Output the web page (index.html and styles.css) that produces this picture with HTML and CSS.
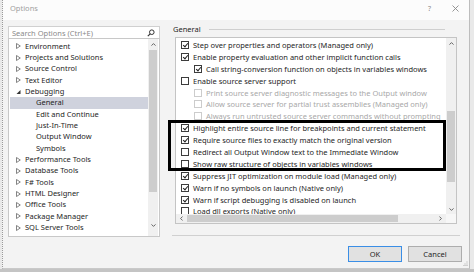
FILE: index.html
```html
<!DOCTYPE html>
<html>
<head>
<meta charset="utf-8">
<link rel="stylesheet" href="styles.css">
</head>
<body>
<div class="screen">
  <div class="dialog">
    <div class="titlebar">
      <span class="title">Options</span>
      <span class="tb-btns">
        <span class="help">?</span>
        <svg class="close" width="7" height="7" viewBox="0 0 7 7"><path d="M0.5 0.5 L6.5 6.5 M6.5 0.5 L0.5 6.5" stroke="#8a8a8a" stroke-width="0.9" fill="none"/></svg>
      </span>
    </div>
    <div class="content">
      <div class="left">
        <div class="search">
          <span class="search-text">Search Options (Ctrl+E)</span>
          <svg class="search-icon" width="8" height="8" viewBox="0 0 8 8"><circle cx="4.8" cy="3.2" r="2.3" stroke="#333" stroke-width="1" fill="none"/><path d="M3.2 4.8 L0.8 7.2" stroke="#333" stroke-width="1.2"/></svg>
        </div>
        <div class="tree">
          <ul class="tree-list">
            <li class="node"><svg class="tri" width="5" height="6" viewBox="0 0 5 6"><path d="M0.5 0.5 L4.3 3 L0.5 5.5 Z" fill="none" stroke="#666" stroke-width="0.8"/></svg>Environment</li>
            <li class="node"><svg class="tri" width="5" height="6" viewBox="0 0 5 6"><path d="M0.5 0.5 L4.3 3 L0.5 5.5 Z" fill="none" stroke="#666" stroke-width="0.8"/></svg>Projects and Solutions</li>
            <li class="node"><svg class="tri" width="5" height="6" viewBox="0 0 5 6"><path d="M0.5 0.5 L4.3 3 L0.5 5.5 Z" fill="none" stroke="#666" stroke-width="0.8"/></svg>Source Control</li>
            <li class="node"><svg class="tri" width="5" height="6" viewBox="0 0 5 6"><path d="M0.5 0.5 L4.3 3 L0.5 5.5 Z" fill="none" stroke="#666" stroke-width="0.8"/></svg>Text Editor</li>
            <li class="node"><svg class="tri" width="5" height="6" viewBox="0 0 5 6"><path d="M4.5 1 L4.5 5 L0.5 5 Z" fill="#333"/></svg>Debugging</li>
            <li class="node child selected">General</li>
            <li class="node child">Edit and Continue</li>
            <li class="node child">Just-In-Time</li>
            <li class="node child">Output Window</li>
            <li class="node child">Symbols</li>
            <li class="node"><svg class="tri" width="5" height="6" viewBox="0 0 5 6"><path d="M0.5 0.5 L4.3 3 L0.5 5.5 Z" fill="none" stroke="#666" stroke-width="0.8"/></svg>Performance Tools</li>
            <li class="node"><svg class="tri" width="5" height="6" viewBox="0 0 5 6"><path d="M0.5 0.5 L4.3 3 L0.5 5.5 Z" fill="none" stroke="#666" stroke-width="0.8"/></svg>Database Tools</li>
            <li class="node"><svg class="tri" width="5" height="6" viewBox="0 0 5 6"><path d="M0.5 0.5 L4.3 3 L0.5 5.5 Z" fill="none" stroke="#666" stroke-width="0.8"/></svg>F# Tools</li>
            <li class="node"><svg class="tri" width="5" height="6" viewBox="0 0 5 6"><path d="M0.5 0.5 L4.3 3 L0.5 5.5 Z" fill="none" stroke="#666" stroke-width="0.8"/></svg>HTML Designer</li>
            <li class="node"><svg class="tri" width="5" height="6" viewBox="0 0 5 6"><path d="M0.5 0.5 L4.3 3 L0.5 5.5 Z" fill="none" stroke="#666" stroke-width="0.8"/></svg>Office Tools</li>
            <li class="node"><svg class="tri" width="5" height="6" viewBox="0 0 5 6"><path d="M0.5 0.5 L4.3 3 L0.5 5.5 Z" fill="none" stroke="#666" stroke-width="0.8"/></svg>Package Manager</li>
            <li class="node"><svg class="tri" width="5" height="6" viewBox="0 0 5 6"><path d="M0.5 0.5 L4.3 3 L0.5 5.5 Z" fill="none" stroke="#666" stroke-width="0.8"/></svg>SQL Server Tools</li>
            <li class="node"><svg class="tri" width="5" height="6" viewBox="0 0 5 6"><path d="M0.5 0.5 L4.3 3 L0.5 5.5 Z" fill="none" stroke="#666" stroke-width="0.8"/></svg>Text Templating</li>
          </ul>
          <div class="vscroll tree-scroll">
            <div class="arrow"><svg width="5" height="3" viewBox="0 0 5 3"><path d="M0.5 2.6 L2.5 0.6 L4.5 2.6" stroke="#555" stroke-width="0.9" fill="none"/></svg></div>
            <div class="track"><div class="thumb tree-thumb"></div></div>
            <div class="arrow"><svg width="5" height="3" viewBox="0 0 5 3"><path d="M0.5 0.4 L2.5 2.4 L4.5 0.4" stroke="#555" stroke-width="0.9" fill="none"/></svg></div>
          </div>
        </div>
      </div>
      <div class="right">
        <div class="group-head"><span class="group-label">General</span><span class="rule"></span></div>
        <div class="listbox">
          <div class="list-main">
            <div class="rows">
              <div class="row"><span class="cb on"></span>Step over properties and operators (Managed only)</div>
              <div class="row"><span class="cb on"></span>Enable property evaluation and other implicit function calls</div>
              <div class="row indent"><span class="cb on"></span>Call string-conversion function on objects in variables windows</div>
              <div class="row"><span class="cb"></span>Enable source server support</div>
              <div class="row indent disabled"><span class="cb"></span>Print source server diagnostic messages to the Output window</div>
              <div class="row indent disabled"><span class="cb"></span>Allow source server for partial trust assemblies (Managed only)</div>
              <div class="row indent disabled"><span class="cb"></span>Always run untrusted source server commands without prompting</div>
              <div class="row"><span class="cb on"></span>Highlight entire source line for breakpoints and current statement</div>
              <div class="row"><span class="cb on"></span>Require source files to exactly match the original version</div>
              <div class="row"><span class="cb"></span>Redirect all Output Window text to the Immediate Window</div>
              <div class="row"><span class="cb"></span>Show raw structure of objects in variables windows</div>
              <div class="row"><span class="cb on"></span>Suppress JIT optimization on module load (Managed only)</div>
              <div class="row"><span class="cb on"></span>Warn if no symbols on launch (Native only)</div>
              <div class="row"><span class="cb on"></span>Warn if script debugging is disabled on launch</div>
              <div class="row"><span class="cb"></span>Load dll exports (Native only)</div>
            </div>
            <div class="vscroll list-scroll">
              <div class="arrow"><svg width="5" height="3" viewBox="0 0 5 3"><path d="M0.5 2.6 L2.5 0.6 L4.5 2.6" stroke="#555" stroke-width="0.9" fill="none"/></svg></div>
              <div class="track"><div class="thumb list-thumb"></div></div>
              <div class="arrow"><svg width="5" height="3" viewBox="0 0 5 3"><path d="M0.5 0.4 L2.5 2.4 L4.5 0.4" stroke="#555" stroke-width="0.9" fill="none"/></svg></div>
            </div>
          </div>
          <div class="hscroll">
            <div class="harrow"><svg width="3" height="5" viewBox="0 0 3 5"><path d="M2.6 0.5 L0.6 2.5 L2.6 4.5" stroke="#555" stroke-width="0.9" fill="none"/></svg></div>
            <div class="htrack"><div class="hthumb"></div></div>
            <div class="harrow"><svg width="3" height="5" viewBox="0 0 3 5"><path d="M0.4 0.5 L2.4 2.5 L0.4 4.5" stroke="#555" stroke-width="0.9" fill="none"/></svg></div>
            <div class="corner"></div>
          </div>
          <div class="annot"></div>
        </div>
        <div class="sep"></div>
      </div>
    </div>
    <div class="footer">
      <button class="btn ok">OK</button>
      <button class="btn">Cancel</button>
      <svg class="grip" width="5" height="5" viewBox="0 0 5 5"><rect x="3.5" y="0.5" width="1" height="1" fill="#aaa"/><rect x="1.5" y="2.5" width="1" height="1" fill="#aaa"/><rect x="3.5" y="2.5" width="1" height="1" fill="#aaa"/><rect x="-0.5" y="4" width="1" height="1" fill="#aaa"/><rect x="1.5" y="4" width="1" height="1" fill="#aaa"/><rect x="3.5" y="4" width="1" height="1" fill="#aaa"/></svg>
    </div>
  </div>
  <div class="strip"></div>
</div>
</body>
</html>
```

FILE: styles.css
```css
* { box-sizing: border-box; }
html, body { margin: 0; padding: 0; }
body {
  font-family: "Noto Sans", "Open Sans", sans-serif;
  font-size: 7.5px;
  color: #1e1e1e;
  background: #d6d6d6;
}
.screen {
  width: 474px;
  height: 272px;
  overflow: hidden;
  display: flex;
  flex-direction: column;
  background: #e9e9e9;
}
.dialog {
  margin-left: 2px;
  width: 468px;
  height: 269px;
  flex: none;
  background: #f3f3f3;
  border-left: 1px dotted #9a9a9a;
  border-right: 1px solid #bdbdbd;
  border-bottom: 1px solid #c9c9c9;
  display: flex;
  flex-direction: column;
}
.titlebar {
  height: 20px;
  flex: none;
  background: #fcfcfc;
  display: flex;
  align-items: flex-start;
  justify-content: space-between;
  padding: 3px 0 0 7px;
}
.title { color: #a0a0a0; font-size: 7.5px; line-height: 10px; }
.tb-btns { display: flex; align-items: center; gap: 21px; padding-right: 10px; height: 10px; }
.help { color: #8a8a8a; font-size: 7px; }
.content {
  display: flex;
  padding-left: 5px;
  height: 217px;
  flex: none;
}
.left {
  width: 152px;
  display: flex;
  flex-direction: column;
}
.search {
  margin-top: 6px;
  height: 12px;
  background: #fff;
  border: 1px solid #d0d0d0;
  border-bottom: none;
  display: flex;
  align-items: center;
  justify-content: space-between;
  padding: 0 4px 0 3px;
}
.search-text { color: #8a8a8a; font-size: 7.5px; line-height: 10px; }
.tree {
  height: 199px;
  background: #fff;
  border: 1px solid #c8c8c8;
  display: flex;
}
.tree-list {
  list-style: none;
  margin: 0;
  padding: 1.5px 0 0 1px;
  flex: 1;
  overflow: hidden;
}
.node {
  height: 11.35px;
  line-height: 11.35px;
  padding-left: 6px;
  display: flex;
  align-items: center;
  white-space: nowrap;
}
.tri { flex: none; margin-right: 4px; }
.node.child { padding-left: 26px; }
.node.selected { background: #cfd2dd; }
.vscroll {
  width: 10px;
  flex: none;
  display: flex;
  flex-direction: column;
  background: #f0f0f0;
}
.arrow {
  height: 10px;
  flex: none;
  display: flex;
  align-items: center;
  justify-content: center;
}
.track { flex: 1; }
.thumb { background: #cdcdcd; margin-left: 1px; margin-right: 1px; }
.tree-scroll { margin-right: 1px; }
.tree-thumb { margin-top: 1px; height: 142px; }
.tree-scroll .arrow:last-child { height: 22px; }
.right {
  margin-left: 12px;
  width: 288px;
  display: flex;
  flex-direction: column;
}
.group-head {
  height: 17px;
  display: flex;
  align-items: center;
  padding-left: 1px;
}
.group-label { font-size: 7.5px; line-height: 10px; }
.rule { flex: none; width: 236px; margin-left: 8px; border-top: 1px solid #cfcfcf; margin-top: 1px; }
.listbox {
  position: relative;
  margin: 0 3px;
  height: 187px;
  background: #fff;
  border: 1px solid #c4c4c4;
  display: flex;
  flex-direction: column;
}
.list-main {
  height: 176px;
  display: flex;
}
.rows {
  flex: 1;
  overflow: hidden;
  padding-top: 1px;
}
.row {
  height: 11.9px;
  display: flex;
  align-items: center;
  padding-left: 5px;
  white-space: nowrap;
}
.row.indent { padding-left: 18px; }
.row.disabled { color: #a8a8a8; }
.cb {
  flex: none;
  width: 8px;
  height: 8px;
  border: 1px solid #3c3c3c;
  background: #fff;
  margin-right: 4px;
  position: relative;
}
.row.disabled .cb { border-color: #cccccc; }
.cb.on::after {
  content: "";
  position: absolute;
  left: 1.6px;
  top: 0px;
  width: 2px;
  height: 4px;
  border-right: 1px solid #222;
  border-bottom: 1px solid #222;
  transform: rotate(40deg);
}
.list-scroll .arrow:first-child { height: 10px; }
.list-thumb { margin-top: 63px; height: 71px; }
.hscroll {
  height: 9px;
  display: flex;
  background: #f0f0f0;
}
.harrow {
  width: 11px;
  flex: none;
  display: flex;
  align-items: center;
  justify-content: center;
}
.htrack { flex: 1; display: flex; align-items: stretch; padding: 1px 0; }
.hthumb { width: 211px; background: #cdcdcd; }
.corner { width: 10px; flex: none; background: #f7f7f7; }
.annot {
  position: absolute;
  left: -8px;
  top: 82px;
  width: 278px;
  height: 51px;
  border: 3px solid #000;
}
.sep {
  margin-top: 11px;
  height: 1px;
  background: #d0d0d0;
}
.footer {
  display: flex;
  justify-content: flex-end;
  align-items: flex-start;
  gap: 6px;
  padding-right: 1px;
  margin-top: 9px;
}
.grip { margin-top: 15px; margin-left: -5px; }
.btn {
  width: 54px;
  height: 16px;
  padding: 0;
  font-family: "Noto Sans", "Open Sans", sans-serif;
  font-size: 7.5px;
  color: #1e1e1e;
  background: #e1e1e1;
  border: 1px solid #adadad;
}
.btn.ok { border: 1.5px solid #3a8ee6; }
.strip {
  flex: 1;
  background: #c4c4c4;
}
```
